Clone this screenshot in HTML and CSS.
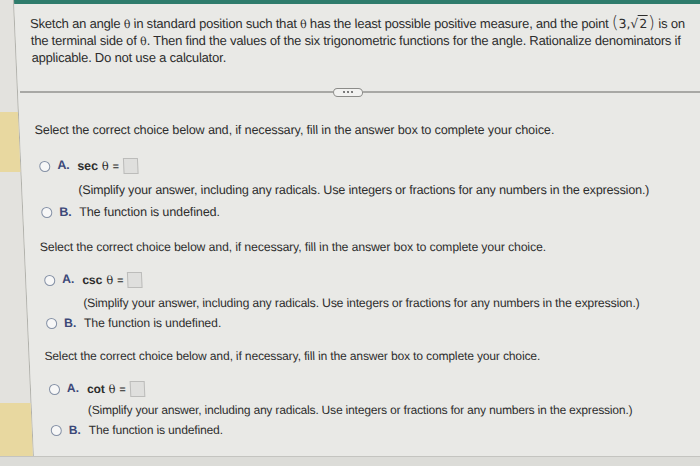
FILE: index.html
```html
<!DOCTYPE html>
<html>
<head>
<meta charset="utf-8">
<link rel="stylesheet" href="styles.css">
</head>
<body>
<div class="layout">
  <div class="side">
    <div class="side-gap1"></div>
    <div class="side-hl1"></div>
    <div class="side-gap2"></div>
    <div class="side-hl2"></div>
  </div>
  <div class="main">
    <div class="topbar"></div>
    <div class="content">
      <p class="question">Sketch an angle <span class="th">θ</span> in standard position such that <span class="th">θ</span> has the least possible positive measure, and the point <span class="pt"><span class="paren">(</span>3,<span class="rad">√<span class="radicand">2</span></span><span class="paren">)</span></span> is on the terminal side of <span class="th">θ</span>. Then find the values of the six trigonometric functions for the angle. Rationalize denominators if applicable. Do not use a calculator.</p>
      <div class="divider"><span class="line left"></span><span class="pill"><i></i><i></i><i></i></span><span class="line right"></span></div>

      <section class="part p1">
        <p class="prompt">Select the correct choice below and, if necessary, fill in the answer box to complete your choice.</p>
        <div class="choice a">
          <span class="radio"></span><span class="letter">A.</span>
          <div class="body">
            <div class="eq"><b>sec</b> <span class="th">θ</span> <span class="eqs">=</span> <span class="box"></span></div>
            <div class="hint">(Simplify your answer, including any radicals. Use integers or fractions for any numbers in the expression.)</div>
          </div>
        </div>
        <div class="choice b">
          <span class="radio"></span><span class="letter">B.</span>
          <div class="body">The function is undefined.</div>
        </div>
      </section>

      <section class="part p2">
        <p class="prompt">Select the correct choice below and, if necessary, fill in the answer box to complete your choice.</p>
        <div class="choice a">
          <span class="radio"></span><span class="letter">A.</span>
          <div class="body">
            <div class="eq"><b>csc</b> <span class="th">θ</span> <span class="eqs">=</span> <span class="box"></span></div>
            <div class="hint">(Simplify your answer, including any radicals. Use integers or fractions for any numbers in the expression.)</div>
          </div>
        </div>
        <div class="choice b">
          <span class="radio"></span><span class="letter">B.</span>
          <div class="body">The function is undefined.</div>
        </div>
      </section>

      <section class="part p3">
        <p class="prompt">Select the correct choice below and, if necessary, fill in the answer box to complete your choice.</p>
        <div class="choice a">
          <span class="radio"></span><span class="letter">A.</span>
          <div class="body">
            <div class="eq"><b>cot</b> <span class="th">θ</span> <span class="eqs">=</span> <span class="box"></span></div>
            <div class="hint">(Simplify your answer, including any radicals. Use integers or fractions for any numbers in the expression.)</div>
          </div>
        </div>
        <div class="choice b">
          <span class="radio"></span><span class="letter">B.</span>
          <div class="body">The function is undefined.</div>
        </div>
      </section>
    </div>
  </div>
</div>
</body>
</html>
```
FILE: styles.css
```css
html, body {
  margin: 0;
  padding: 0;
  overflow: hidden;
}
body {
  width: 700px;
  height: 466px;
  background: #dcdcd8;
  font-family: "Liberation Sans", Arial, sans-serif;
  color: #2d2d2d;
}
.layout {
  display: flex;
  height: 456px;
  width: 720px;
  margin-left: -20px;
  transform: skewX(2.5deg);
  transform-origin: 0 0;
  border-bottom: 1px solid #c4c4c0;
}
.side {
  width: 33px;
  flex: none;
  border-right: 1px solid #b0b0ab;
  background: #e3e2de;
  display: flex;
  flex-direction: column;
}
.side-gap1 { height: 112px; }
.side-hl1 { height: 60px; background: #e8d8a0; }
.side-gap2 { height: 231px; }
.side-hl2 { height: 53px; background: #e8d8a0; }
.main {
  flex: 1;
  background: #e9e9e6;
}
.topbar {
  height: 4px;
  background: #2f7c6c;
}
.content {
  width: 664px;
  padding: 12px 0 0 15px;
}
.question {
  margin: 0;
  font-size: 13px;
  line-height: 16px;
  letter-spacing: -0.2px;
}
.th {
  font-family: "DejaVu Serif", serif;
  font-size: 11px;
}
.pt {
  font-family: "DejaVu Sans", "Liberation Sans", sans-serif;
  font-size: 12.5px;
  letter-spacing: 0;
}
.paren {
  font-size: 17px;
  font-weight: 300;
  line-height: 10px;
}
.rad .radicand {
  border-top: 1px solid #2d2d2d;
  padding: 0 1px;
}
.divider {
  display: flex;
  align-items: center;
  margin: 20px 0 0 -13px;
  height: 12px;
  width: 692px;
}
.divider .line {
  height: 2px;
  background: #a8a8a5;
}
.divider .left { width: 313px; flex: none; }
.divider .right { flex: 1; }
.pill {
  width: 28px;
  height: 7px;
  flex: none;
  border: 1px solid #8c8c89;
  border-radius: 5px;
  background: #f2f2f0;
  display: flex;
  justify-content: center;
  align-items: center;
  gap: 2px;
}
.pill i {
  width: 2px;
  height: 2px;
  background: #555;
  border-radius: 1px;
}
.part {
  letter-spacing: -0.1px;
}
.p1 { font-size: 12.5px; padding-top: 25px; }
.p2 { font-size: 12.2px; padding-top: 20px; }
.p3 { font-size: 11.95px; padding-top: 18px; }
.prompt {
  margin: 0;
  line-height: 15px;
}
.p1 .prompt { margin-bottom: 20px; }
.p2 .prompt { margin-bottom: 17px; }
.p3 .prompt { margin-bottom: 17px; }
.choice {
  display: flex;
  align-items: flex-start;
  margin-left: 3px;
}
.p1 .b { margin-top: 7px; }
.p2 .b { margin-top: 5px; }
.p3 .b { margin-top: 5px; }
.p1 .hint { margin-top: 9px; }
.p2 .hint { margin-top: 8px; }
.p3 .hint { margin-top: 6px; }
.hint { letter-spacing: -0.15px; }
.radio {
  width: 9px;
  height: 9px;
  border: 1.5px solid #8591a6;
  border-radius: 50%;
  background: #f7f7f7;
  margin-top: 2px;
  flex: none;
}
.a .radio { margin-top: 3px; }
.letter {
  width: 20px;
  padding-left: 7px;
  font-weight: bold;
  color: #3c4878;
  line-height: 15px;
  flex: none;
}
.body {
  line-height: 15px;
}
.eq {
  font-size: 1em;
  display: flex;
  align-items: center;
  gap: 4px;
  height: 16px;
}
.eq b { font-weight: bold; }
.eq .th { font-size: 11.5px; }
.eqs { font-size: 11px; }
.box {
  width: 13px;
  height: 14px;
  border: 1px solid #bcbcba;
  background: #dfdfdd;
}
```
